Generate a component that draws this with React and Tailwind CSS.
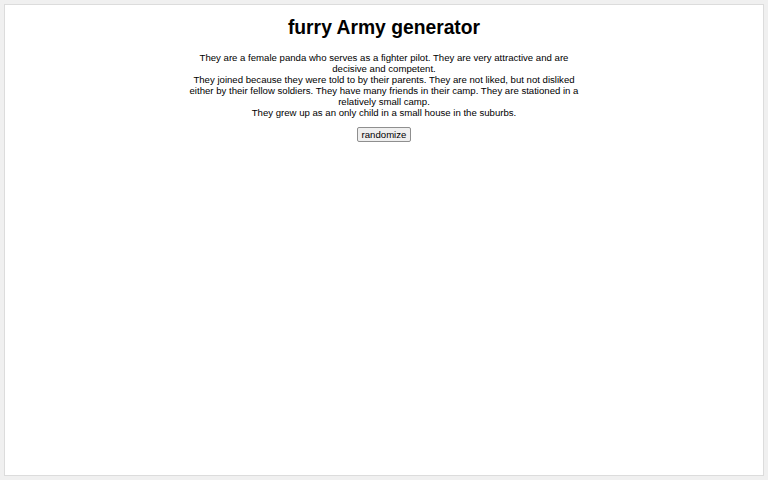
export default function App() {
  return (
    <div className="h-[480px] bg-[#f0f0f0] p-[4px] font-['Liberation_Sans',Arial,sans-serif]">
      <div className="h-full bg-white border border-[#dcdcdc] flex flex-col items-center">
        <h1 className="mt-[12px] text-[19.3px] leading-[22px] font-bold text-black">furry Army generator</h1>
        <p className="mt-[13px] w-[392px] text-center text-[9.6px] leading-[11px] text-black">
          They are a female panda who serves as a fighter pilot. They are very attractive and are decisive and competent.
          <br />
          They joined because they were told to by their parents. They are not liked, but not disliked either by their fellow soldiers. They have many friends in their camp. They are stationed in a relatively small camp.
          <br />
          They grew up as an only child in a small house in the suburbs.
        </p>
        <button className="mt-[9px] px-[4px] h-[15px] text-[9.6px] leading-[13px] text-black bg-[#efefef] border border-[#8f8f8f] rounded-[2px]">
          randomize
        </button>
      </div>
    </div>
  );
}
